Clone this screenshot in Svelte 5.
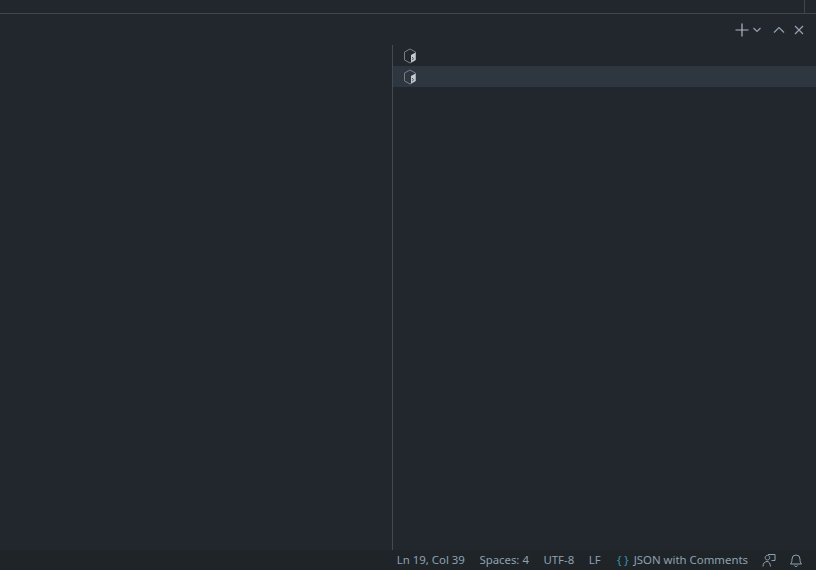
<script>
    const statusItems = ["Ln 19, Col 39", "Spaces: 4", "UTF-8", "LF"];
    const terminals = [{ active: false }, { active: true }];
</script>

<main class="window">
    <div class="topbar">
        <span class="tab-edge"></span>
    </div>

    <section class="panel">
        <header class="panel-actions">
            <svg class="plus" width="14" height="14" viewBox="0 0 14 14">
                <path d="M0.5 7H13.5M7 0.5V13.5" />
            </svg>
            <svg class="chev" width="8" height="6" viewBox="0 0 8 6">
                <path d="M0.5 1L4 4.5L7.5 1" />
            </svg>
            <svg class="up" width="12" height="8" viewBox="0 0 12 8">
                <path d="M1 6.5L6 1.5L11 6.5" />
            </svg>
            <svg class="close" width="10" height="10" viewBox="0 0 10 10">
                <path d="M1 1L9 9M9 1L1 9" />
            </svg>
        </header>

        <div class="panel-body">
            <div class="terminal-area"></div>
            <ul class="terminal-list">
                {#each terminals as term}
                    <li class:active={term.active}>
                        <svg width="14" height="16" viewBox="0 0 14 16">
                            <path class="hex" d="M7 1L12.5 4V12L7 15L1.5 12V4Z" />
                            <path class="side" d="M12.5 4.5V12L8 14.5V7Z" />
                            <path class="mark" d="M9.2 9L10.4 10.8L9.2 12.2" />
                        </svg>
                    </li>
                {/each}
            </ul>
        </div>
    </section>

    <footer class="statusbar">
        {#each statusItems as item}
            <span class="status-item">{item}</span>
        {/each}
        <span class="status-item lang"><span class="braces">{"{ }"}</span>JSON with Comments</span>
        <svg class="feedback" width="14" height="14" viewBox="0 0 14 14">
            <path d="M6 1.5H13V7.5H9.5M5.5 7A2.3 2.3 0 1 0 5.4 7ZM1 13.5C1 10 3 8.5 5 8.5C7 8.5 8 10 8.5 13.5" />
        </svg>
        <svg class="bell" width="14" height="14" viewBox="0 0 14 14">
            <path d="M1.5 11H12.5C11.3 9.5 11 8.5 11 6A4 4 0 0 0 3 6C3 8.5 2.7 9.5 1.5 11ZM5.5 12.5A1.6 1.6 0 0 0 8.5 12.5" />
        </svg>
    </footer>
</main>

<style>
    :global(body) {
        margin: 0;
        background: #22272e;
    }

    .window {
        width: 816px;
        height: 570px;
        display: flex;
        flex-direction: column;
        background: #22272e;
        font-family: "Noto Sans", "Open Sans", sans-serif;
    }

    .topbar {
        height: 13px;
        display: flex;
        justify-content: flex-end;
        border-bottom: 1px solid #3f464d;
        flex: none;
    }

    .tab-edge {
        width: 1px;
        margin-right: 11px;
        background: #3f464d;
    }

    .panel {
        flex: 1;
        display: flex;
        flex-direction: column;
        min-height: 0;
    }

    .panel-actions {
        height: 31px;
        display: flex;
        align-items: center;
        justify-content: flex-end;
        padding-right: 12px;
        flex: none;

        svg {
            fill: none;
            stroke: #95a3b0;
            stroke-width: 1.2;
        }

        .plus {
            margin-right: 4px;
            stroke: #aeb8c2;
        }

        .chev {
            margin-right: 12px;
        }

        .up {
            margin-right: 9px;
        }
    }

    .panel-body {
        flex: 1;
        display: flex;
        min-height: 0;
    }

    .terminal-area {
        width: 392px;
        border-right: 1px solid #434a52;
    }

    .terminal-list {
        flex: 1;
        list-style: none;
        margin: 0;
        padding: 0;

        li {
            height: 21px;
            padding-left: 10px;
            display: flex;
            align-items: center;
        }

        li.active {
            background: #2e3740;
        }

        svg {
            display: block;
        }

        .hex {
            fill: none;
            stroke: #767e86;
            stroke-width: 1;
        }

        .side {
            fill: #c5cace;
        }

        .mark {
            fill: none;
            stroke: #4a5058;
            stroke-width: 1;
        }
    }

    .statusbar {
        height: 20px;
        flex: none;
        display: flex;
        align-items: center;
        justify-content: flex-end;
        background: #1f2429;
        color: #8fa1b1;
        font-size: 11.4px;
        line-height: 18px;
        padding: 0 13px 0 0;
        box-sizing: border-box;

        svg {
            fill: none;
            stroke: #8fa1b1;
            stroke-width: 1;
        }
    }

    .status-item {
        margin-right: 14.5px;
        white-space: nowrap;
    }

    .lang {
        margin-right: 14px;
    }

    .braces {
        color: #3a93ad;
        margin: 0 5px 0 2px;
    }

    .feedback {
        margin-right: 13px;
    }
</style>
